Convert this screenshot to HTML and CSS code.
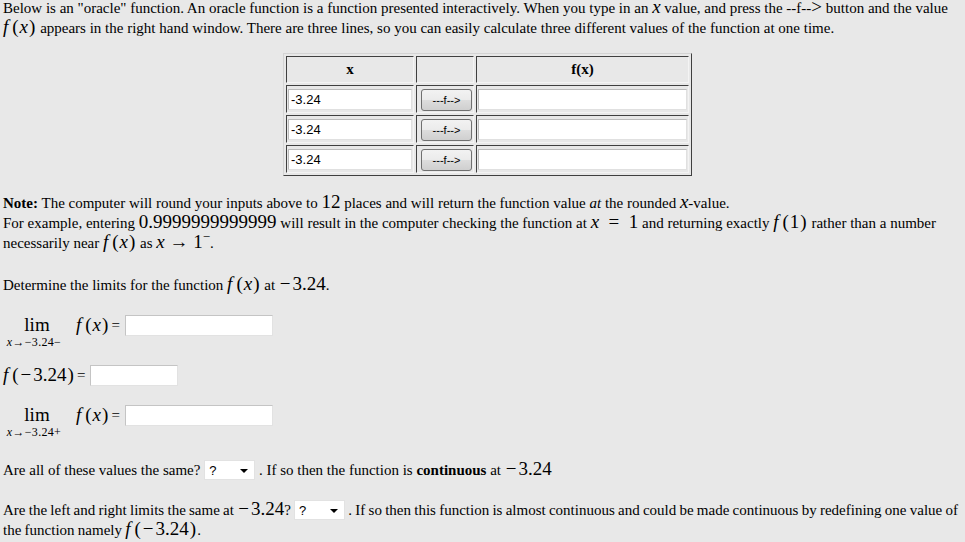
FILE: index.html
```html
<!DOCTYPE html>
<html>
<head>
<meta charset="utf-8">
<link rel="stylesheet" href="styles.css">
</head>
<body>
<p class="intro">Below is an "oracle" function. An oracle function is a function presented interactively. When you type in an <span class="m"><i>x</i></span> value, and press the --f--<span class="m">&gt;</span> button and the value <span class="m"><i class="f">f</i><span class="pa">(</span><i>x</i><span class="pa">)</span></span> appears in the right hand window. There are three lines, so you can easily calculate three different values of the function at one time.</p>

<table class="oracle">
  <tr>
    <th class="c1">x</th>
    <th class="c2"></th>
    <th class="c3">f(x)</th>
  </tr>
  <tr>
    <td><input class="in-x" type="text" value="-3.24"></td>
    <td><button class="fbtn">---f--&gt;</button></td>
    <td><input class="in-f" type="text"></td>
  </tr>
  <tr>
    <td><input class="in-x" type="text" value="-3.24"></td>
    <td><button class="fbtn">---f--&gt;</button></td>
    <td><input class="in-f" type="text"></td>
  </tr>
  <tr>
    <td><input class="in-x" type="text" value="-3.24"></td>
    <td><button class="fbtn">---f--&gt;</button></td>
    <td><input class="in-f" type="text"></td>
  </tr>
</table>

<p class="note"><b>Note:</b> The computer will round your inputs above to <span class="m">12</span> places and will return the function value <i>at</i> the rounded <span class="m"><i>x</i></span>-value.<br>
For example, entering <span class="m">0.9999999999999</span> will result in the computer checking the function at <span class="m"><i>x</i> &nbsp;= &nbsp;1</span> and returning exactly <span class="m"><i class="f">f</i><span class="pa">(</span>1<span class="pa">)</span></span> rather than a number necessarily near <span class="m"><i class="f">f</i><span class="pa">(</span><i>x</i><span class="pa">)</span></span> as <span class="m"><i>x</i> &#8594; 1<sup>&#8722;</sup></span>.</p>

<p class="det">Determine the limits for the function <span class="m"><i class="f">f</i><span class="pa">(</span><i>x</i><span class="pa">)</span></span> at <span class="m"><span class="mi">&#8722;</span>3.24</span>.</p>

<div class="row row-lim1">
  <span class="lim"><span class="lim-w">lim</span><span class="lim-s"><i>x</i>&#8594;&#8722;3.24&#8722;</span></span>
  <span class="m fx"><i class="f">f</i><span class="pa">(</span><i>x</i><span class="pa">)</span></span><span class="eq">=</span><input class="ans wide" type="text">
</div>

<div class="row row-val">
  <span class="m fv"><i class="f">f</i><span class="pa">(</span><span class="mi">&#8722;</span>3.24<span class="pa">)</span></span><span class="eq">=</span><input class="ans narrow" type="text">
</div>

<div class="row row-lim2">
  <span class="lim"><span class="lim-w">lim</span><span class="lim-s"><i>x</i>&#8594;&#8722;3.24+</span></span>
  <span class="m fx"><i class="f">f</i><span class="pa">(</span><i>x</i><span class="pa">)</span></span><span class="eq">=</span><input class="ans wide" type="text">
</div>

<p class="q1">Are all of these values the same? <span class="sel"><select><option>?</option></select></span> . If so then the function is <b>continuous</b> at <span class="m"><span class="mi">&#8722;</span>3.24</span></p>

<p class="q2">Are the left and right limits the same at <span class="m"><span class="mi">&#8722;</span>3.24</span>? <span class="sel"><select><option>?</option></select></span> . If so then this function is almost continuous and could be made continuous by redefining one value of the function namely <span class="m"><i class="f">f</i><span class="pa">(</span><span class="mi">&#8722;</span>3.24<span class="pa">)</span></span>.</p>
</body>
</html>
```

FILE: styles.css
```css
html, body {
  margin: 0;
  padding: 0;
  background: #e8e8e8;
}
body {
  padding: 0 0 0 3px;
  font-family: "Liberation Serif", "Times New Roman", serif;
  font-size: 15px;
  color: #000;
}
p {
  margin: 0;
  line-height: 20px;
}
.m {
  font-family: "Liberation Serif", "Times New Roman", serif;
  font-size: 19px;
  line-height: 0;
  white-space: nowrap;
}
.m i {
  font-style: italic;
}
.m i.f {
  margin-right: 3px;
}
.pa {
  margin: 0 1px;
}
.mi {
  margin: 0 2px 0 1px;
}
.m sup {
  font-size: 13px;
  vertical-align: 7px;
  line-height: 0;
}
.intro {
  margin-top: -2px;
}
.oracle {
  margin: 15px 0 0 280px;
  border: 1px solid;
  border-color: #d4d4d4 #404040 #404040 #d4d4d4;
  border-spacing: 2px;
}
.oracle th, .oracle td {
  border: 1px solid;
  border-color: #404040 #f4f4f4 #f4f4f4 #404040;
  padding: 1px;
}
.oracle th {
  height: 23px;
  font-weight: bold;
  font-size: 15px;
  text-align: center;
  vertical-align: middle;
}
.c1 { width: 124px; }
.c2 { width: 54px; }
.c3 { width: 209px; }
.oracle input {
  display: block;
  box-sizing: border-box;
  height: 21px;
  margin: 2px 0 1px;
  border: 1px solid;
  border-color: #bcbcbc #e0e0e0 #e0e0e0 #bcbcbc;
  background: #fff;
  font-family: "Liberation Sans", Arial, sans-serif;
  font-size: 13px;
  padding: 0 2px;
  outline: none;
}
.in-x { width: 124px; }
.in-f { width: 209px; }
.fbtn {
  display: block;
  box-sizing: border-box;
  width: 51px;
  height: 22px;
  margin: 2px 0 0 3px;
  border: 1px solid #707070;
  border-radius: 3px;
  background: linear-gradient(#f2f2f2, #ebebeb 50%, #dddddd 51%, #cfcfcf);
  font-family: "Liberation Sans", Arial, sans-serif;
  font-size: 11px;
  padding: 0;
  color: #000;
}
.note {
  margin-top: 17px;
}
.det {
  margin-top: 22px;
}
.row {
  display: flex;
  align-items: flex-start;
}
.row-lim1 { margin-top: 20px; }
.row-val { margin-top: 15px; }
.row-lim2 { margin-top: 19px; }
.lim {
  display: flex;
  flex-direction: column;
  align-items: center;
  width: 62px;
}
.lim-w {
  font-size: 19px;
  line-height: 20px;
  margin-left: 6px;
}
.lim-s {
  font-size: 12px;
  line-height: 15px;
  white-space: nowrap;
  letter-spacing: 0.3px;
}
.fx, .fv {
  line-height: 20px;
}
.fx {
  margin-left: 11px;
}
.eq {
  font-size: 15px;
  line-height: 20px;
  margin: 0 5px 0 2px;
}
.ans {
  box-sizing: border-box;
  height: 21px;
  border: 1px solid;
  border-color: #c4c4c4 #e2e2e2 #e2e2e2 #c4c4c4;
  background: #fff;
  outline: none;
  padding: 0 2px;
  margin: 0;
}
.wide { width: 148px; }
.narrow { width: 88px; }
.q1 {
  margin-top: 20px;
}
.q2 {
  margin-top: 20px;
  word-spacing: -0.5px;
}
.sel {
  position: relative;
  display: inline-block;
  vertical-align: top;
  line-height: 0;
}
.sel select {
  -webkit-appearance: none;
  appearance: none;
  box-sizing: border-box;
  width: 51px;
  height: 20px;
  border: 1px solid #e2e2e2;
  background: #fff;
  font-family: "Liberation Sans", Arial, sans-serif;
  font-size: 13px;
  padding: 0 4px;
  color: #000;
  outline: none;
  margin: 0;
}
.sel::after {
  content: "";
  position: absolute;
  right: 7px;
  top: 9px;
  border-left: 4px solid transparent;
  border-right: 4px solid transparent;
  border-top: 4px solid #000;
}
```
